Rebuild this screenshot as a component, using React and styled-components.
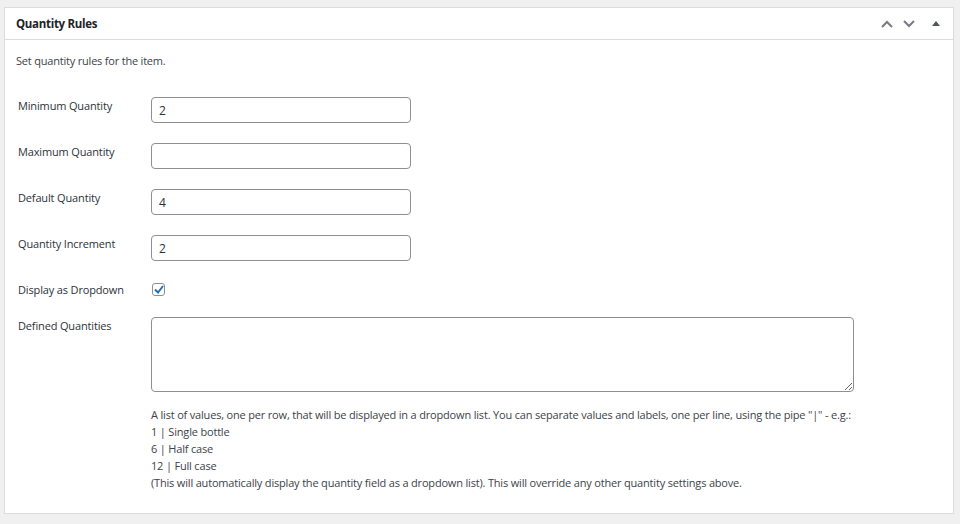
import React from "react";
import { createGlobalStyle, styled } from "styled-components";

const GlobalStyle = createGlobalStyle`
  html, body {
    margin: 0;
    padding: 0;
    background: #f0f0f1;
  }
  body {
    font-family: "Open Sans", "Noto Sans", "Liberation Sans", sans-serif;
    color: #3c434a;
  }
`;

const Page = styled.div`
  padding: 7px 6px 8px 4px;
`;

const Panel = styled.section`
  background: #fff;
  border: 1px solid #dcdcde;
`;

const Header = styled.header`
  display: flex;
  align-items: center;
  justify-content: space-between;
  height: 31px;
  padding: 0 3px 0 11px;
  border-bottom: 1px solid #dcdcde;
`;

const Title = styled.h2`
  margin: 0;
  font-size: 11.5px;
  font-weight: 700;
  letter-spacing: -0.3px;
  color: #1d2327;
`;

const Controls = styled.div`
  display: flex;
  align-items: center;
  gap: 4px;
`;

const HandleButton = styled.button`
  display: flex;
  align-items: center;
  justify-content: center;
  width: ${(p) => p.$w || 18}px;
  height: 20px;
  padding: 0;
  border: none;
  background: none;
  color: #787c82;
  cursor: pointer;
`;

const Body = styled.div`
  padding: 12px 12px 22px 11px;
`;

const Intro = styled.p`
  margin: 0 0 28px;
  font-size: 11px;
  letter-spacing: -0.2px;
  line-height: 17px;
`;

const Form = styled.div`
  display: flex;
  flex-direction: column;
  gap: 20px;
`;

const Row = styled.div`
  display: grid;
  grid-template-columns: 133px 1fr;
  align-items: start;
  padding-left: 2px;
  margin-top: ${(p) => p.$shift || 0}px;
`;

const Label = styled.label`
  font-size: 11px;
  letter-spacing: -0.15px;
  line-height: 17px;
  color: #2c3338;
`;

const TextInput = styled.input`
  box-sizing: border-box;
  width: 260px;
  height: 26px;
  margin: 0;
  padding: 0 7px;
  border: 1px solid #8c8f94;
  border-radius: 4px;
  font-family: inherit;
  font-size: 12px;
  color: #2c3338;
  background: #fff;
  outline: none;
`;

const Check = styled.span`
  box-sizing: border-box;
  display: flex;
  align-items: center;
  justify-content: center;
  width: 13px;
  height: 13px;
  margin: 2px 0 0 1px;
  border: 1px solid #8c8f94;
  border-radius: 3px;
  color: #2271b1;
`;

const Area = styled.textarea`
  box-sizing: border-box;
  display: block;
  width: 703px;
  height: 75px;
  margin: 0;
  padding: 4px 7px;
  border: 1px solid #8c8f94;
  border-radius: 4px;
  font-family: inherit;
  font-size: 12px;
  color: #2c3338;
  resize: both;
  outline: none;
`;

const Help = styled.div`
  margin-top: 14px;
  font-size: 11px;
  letter-spacing: -0.18px;
  line-height: 17px;
  color: #3c434a;
`;

const Chevron = ({ up }) => (
  <svg width="12" height="8" viewBox="0 0 12 8" fill="none">
    <path
      d={up ? "M1 7 L6 2 L11 7" : "M1 1 L6 6 L11 1"}
      stroke="currentColor"
      strokeWidth="2"
    />
  </svg>
);

const Triangle = () => (
  <svg width="8" height="5" viewBox="0 0 8 5">
    <path d="M0 5 L4 0 L8 5 Z" fill="#50575e" />
  </svg>
);

const fields = [
  { label: "Minimum Quantity", value: "2" },
  { label: "Maximum Quantity", value: "" },
  { label: "Default Quantity", value: "4" },
  { label: "Quantity Increment", value: "2" },
];

export default function App() {
  return (
    <Page>
      <GlobalStyle />
      <Panel>
        <Header>
          <Title>Quantity Rules</Title>
          <Controls>
            <HandleButton aria-label="Move up">
              <Chevron up />
            </HandleButton>
            <HandleButton aria-label="Move down">
              <Chevron />
            </HandleButton>
            <HandleButton $w={28} aria-label="Toggle panel">
              <Triangle />
            </HandleButton>
          </Controls>
        </Header>
        <Body>
          <Intro>Set quantity rules for the item.</Intro>
          <Form>
            {fields.map((f) => (
              <Row key={f.label}>
                <Label>{f.label}</Label>
                <TextInput defaultValue={f.value} />
              </Row>
            ))}
            <Row>
              <Label>Display as Dropdown</Label>
              <Check>
                <svg width="10" height="9" viewBox="0 0 10 9">
                  <path
                    d="M1 4.5 L4 7.5 L9 1"
                    fill="none"
                    stroke="currentColor"
                    strokeWidth="2"
                  />
                </svg>
              </Check>
            </Row>
            <Row $shift={-1}>
              <Label>Defined Quantities</Label>
              <div>
                <Area />
                <Help>
                  A list of values, one per row, that will be displayed in a dropdown list. You can
                  separate values and labels, one per line, using the pipe "|" - e.g.:
                  <br />1 | Single bottle
                  <br />6 | Half case
                  <br />12 | Full case
                  <br />(This will automatically display the quantity field as a dropdown list).
                  This will override any other quantity settings above.
                </Help>
              </div>
            </Row>
          </Form>
        </Body>
      </Panel>
    </Page>
  );
}
